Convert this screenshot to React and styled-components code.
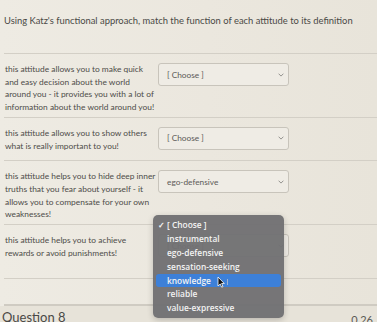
import React from "react";
import styled, { createGlobalStyle } from "styled-components";

const Global = createGlobalStyle`
  html, body { margin: 0; padding: 0; }
  body {
    background: #ebe7de;
    font-family: Lato, "Open Sans", sans-serif;
    -webkit-font-smoothing: antialiased;
  }
`;

const Page = styled.div`
  position: relative;
  width: 377px;
  height: 322px;
  overflow: hidden;
  display: flex;
  flex-direction: column;
  background: linear-gradient(90deg, #eeebe3 0%, #ebe7de 55%, #e8e4da 100%);
`;

const Title = styled.div`
  flex: none;
  padding: 14px 0 0 4px;
  height: 53px;
  box-sizing: border-box;
  font-size: 9.4px;
  line-height: 13px;
  color: #4a4946;
  white-space: nowrap;
`;

const List = styled.div`
  flex: none;
  margin-left: 4px;
  border-top: 1px solid #d3cfc6;
`;

const Row = styled.div`
  display: flex;
  align-items: flex-start;
  padding: 9px 0 ${(p) => p.$pb}px 1px;
  border-bottom: 1px solid #d3cfc6;
`;

const Prompt = styled.div`
  width: 152px;
  flex: none;
  font-size: 8.4px;
  line-height: 12.7px;
  color: #4d4c49;
`;

const Select = styled.div`
  flex: none;
  margin-left: 1px;
  width: 131px;
  height: 23px;
  box-sizing: border-box;
  border: 1px solid #c8c4bb;
  border-radius: 3px;
  background: #efece5;
  display: flex;
  align-items: center;
  justify-content: space-between;
  padding: 0 4px 0 8px;
  font-size: 8.3px;
  color: #5c5b58;
`;

const Chevron = () => (
  <svg width="6" height="4" viewBox="0 0 6 4">
    <path d="M0.6 0.7 L3 3.1 L5.4 0.7" fill="none" stroke="#8a8884" strokeWidth="0.9" />
  </svg>
);

const Spacer = styled.div`
  height: 25px;
  border-bottom: 2px solid #cfcbc2;
`;

const QuestionHeader = styled.div`
  flex: 1;
  display: flex;
  justify-content: space-between;
  align-items: flex-start;
  padding: 4px 4px 0 2px;
  background: #e7e3d9;
  font-size: 13px;
  line-height: 14px;
  color: #4a4946;
`;

const Points = styled.span`
  font-size: 11px;
  padding-top: 3px;
  color: #5a5955;
`;

const Bezel = styled.div`
  height: 2px;
  flex: none;
  background: #2e2e30;
`;

const Menu = styled.div`
  position: absolute;
  left: 153px;
  top: 215px;
  width: 131px;
  height: 103px;
  box-sizing: border-box;
  padding: 3px 3px 0 3px;
  border-radius: 5px;
  background: rgba(112, 112, 114, 0.96);
  box-shadow: 0 2px 6px rgba(0, 0, 0, 0.2);
`;

const Item = styled.div`
  position: relative;
  height: 13.9px;
  line-height: 13.9px;
  padding-left: 11px;
  border-radius: 3px;
  font-family: "Open Sans", Lato, sans-serif;
  font-size: 8.4px;
  font-weight: 600;
  color: #f3f3f3;
  background: ${(p) => (p.$active ? "#3d80d8" : "transparent")};
`;

const Check = styled.span`
  position: absolute;
  left: 2px;
  top: 0;
`;

const Cursor = styled.svg`
  position: absolute;
  left: 217px;
  top: 276px;
`;

const TextCaret = styled.div`
  position: absolute;
  left: 227px;
  top: 279px;
  width: 1px;
  height: 6px;
  background: rgba(200, 200, 205, 0.7);
`;

const rows = [
  {
    text: "this attitude allows you to make quick and easy decision about the world around you - it provides you with a lot of information about the world around you!",
    value: "[ Choose ]",
    pb: 3,
  },
  {
    text: "this attitude allows you to show others what is really important to you!",
    value: "[ Choose ]",
    pb: 8,
  },
  {
    text: "this attitude helps you to hide deep inner truths that you fear about yourself - it allows you to compensate for your own weaknesses!",
    value: "ego-defensive",
    pb: 3,
  },
  {
    text: "this attitude helps you to achieve rewards or avoid punishments!",
    value: "[ Choose ]",
    pb: 19,
  },
];

const options = [
  "[ Choose ]",
  "instrumental",
  "ego-defensive",
  "sensation-seeking",
  "knowledge",
  "reliable",
  "value-expressive",
];

export default function App() {
  return (
    <>
      <Global />
      <Page>
        <Title>
          Using Katz's functional approach, match the function of each attitude to its definition
        </Title>
        <List>
          {rows.map((r, i) => (
            <Row key={i} $pb={r.pb}>
              <Prompt>{r.text}</Prompt>
              <Select>
                <span>{r.value}</span>
                <Chevron />
              </Select>
            </Row>
          ))}
          <Spacer />
        </List>
        <QuestionHeader>
          <span>Question 8</span>
          <Points>0.26</Points>
        </QuestionHeader>
        <Bezel />
        <Menu>
          {options.map((o, i) => (
            <Item key={o} $active={o === "knowledge"}>
              {i === 0 && <Check>✓</Check>}
              {o}
            </Item>
          ))}
        </Menu>
        <Cursor width="8" height="12" viewBox="0 0 8 12">
          <path d="M1 1 L1 10 L3.2 8 L4.7 11.2 L6 10.6 L4.6 7.5 L7.3 7.5 Z" fill="#111" stroke="#fff" strokeWidth="0.8" />
        </Cursor>
        <TextCaret />
      </Page>
    </>
  );
}
